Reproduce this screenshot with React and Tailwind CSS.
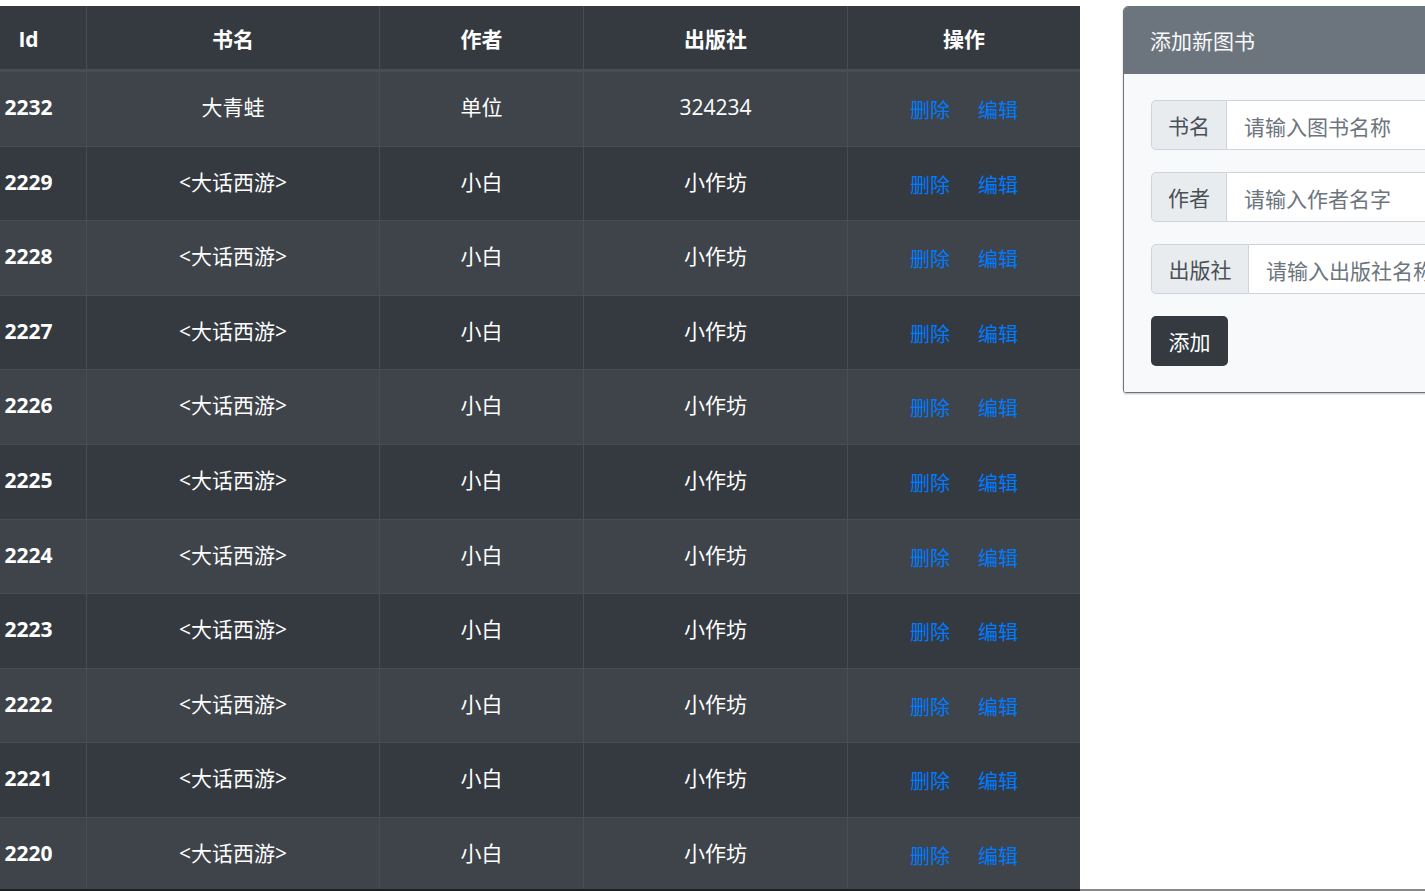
import React from "react";

const rows = [
  { id: "2232", name: "大青蛙", author: "单位", pub: "324234" },
  ...["2229", "2228", "2227", "2226", "2225", "2224", "2223", "2222", "2221", "2220"].map((id) => ({
    id,
    name: "<大话西游>",
    author: "小白",
    pub: "小作坊",
  })),
];

const font = { fontFamily: '"Open Sans", "Noto Sans CJK SC", sans-serif' };

function InputGroup({ label, placeholder, labelW }) {
  return (
    <div className="flex h-[50px] w-full">
      <div
        className={`${labelW} shrink-0 flex items-center justify-center pt-[4px] bg-[#e9ecef] border border-[#ced4da] rounded-l-[5px] text-[21px] text-[#495057]`}
      >
        {label}
      </div>
      <input
        className="flex-1 min-w-0 h-full bg-white border border-l-0 border-[#ced4da] pl-[17px] pt-[4px] text-[21px] text-[#495057] placeholder:text-[#6c757d] outline-none"
        placeholder={placeholder}
        style={font}
      />
    </div>
  );
}

export default function App() {
  return (
    <div className="w-[1425px] h-[891px] overflow-hidden bg-white flex flex-col" style={font}>
      <div className="h-[889px] flex pt-[6px] overflow-hidden">
        {/* Table */}
        <div className="w-[1080px] shrink-0 flex flex-col text-white text-[21px]">
          <div className="h-px bg-[#7a7f84]" />
          <div className="flex h-[65px] shrink-0 bg-[#343a40] border-b-2 border-[#454d55] font-bold">
            <div className="w-[87px] pr-[29px] pt-[5px] flex items-center justify-center border-r border-[#454d55]">Id</div>
            <div className="w-[293px] pt-[5px] flex items-center justify-center border-r border-[#454d55]">书名</div>
            <div className="w-[204px] pt-[5px] flex items-center justify-center border-r border-[#454d55]">作者</div>
            <div className="w-[264px] pt-[5px] flex items-center justify-center border-r border-[#454d55]">出版社</div>
            <div className="w-[232px] pt-[5px] flex items-center justify-center">操作</div>
          </div>
          {rows.map((r, i) => (
            <div
              key={r.id}
              className={`flex h-[74.6px] shrink-0 border-t border-[#454d55] leading-[30px] ${
                i % 2 === 0 ? "bg-[#3e444a]" : "bg-[#343a40]"
              }`}
            >
              <div className="w-[87px] pr-[29px] pt-[20px] text-center font-bold border-r border-[#454d55]">{r.id}</div>
              <div className="w-[293px] pt-[20px] text-center border-r border-[#454d55]">{r.name}</div>
              <div className="w-[204px] pt-[20px] text-center border-r border-[#454d55]">{r.author}</div>
              <div className="w-[264px] pt-[20px] text-center border-r border-[#454d55]">{r.pub}</div>
              <div className="w-[232px] pt-[24px] flex justify-center gap-[28px] text-[20px] text-[#007bff]">
                <span>删除</span>
                <span>编辑</span>
              </div>
            </div>
          ))}
        </div>

        {/* Card */}
        <div className="ml-[43px] w-[380px] shrink-0 self-start flex flex-col border border-[#6c757d] rounded-t-[5px] rounded-b-[3px] overflow-hidden shadow-[0_1px_2px_rgba(0,0,0,0.25)]">
          <div className="h-[67px] bg-[#6c757d] flex items-center pl-[26px] pt-[3px] text-[21px] text-[#f8f9fa]">
            添加新图书
          </div>
          <div className="bg-[#f8f9fa] px-[27px] pt-[26px] pb-[26px] flex flex-col gap-[22px]">
            <InputGroup label="书名" placeholder="请输入图书名称" labelW="w-[76px]" />
            <InputGroup label="作者" placeholder="请输入作者名字" labelW="w-[76px]" />
            <InputGroup label="出版社" placeholder="请输入出版社名称" labelW="w-[98px]" />
            <div>
              <button className="h-[50px] w-[77px] pt-[3px] bg-[#343a40] text-white text-[21px] rounded-[5px]" style={font}>
                添加
              </button>
            </div>
          </div>
        </div>
      </div>
      <div className="h-[2px] flex">
        <div className="w-[1080px] bg-[#1d2124]" />
        <div className="flex-1 bg-[#8a8a8a]" />
      </div>
    </div>
  );
}
